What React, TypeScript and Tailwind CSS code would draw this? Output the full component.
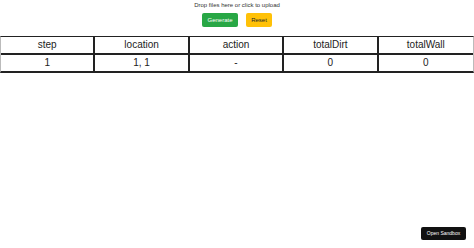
import React from "react";

const headers = ["step", "location", "action", "totalDirt", "totalWall"];
const values = ["1", "1, 1", "-", "0", "0"];

export default function App() {
  return (
    <div className="relative h-[248px] w-[474px] bg-white font-['Liberation_Sans',Arial,sans-serif] text-[#222]">
      <div className="pt-[1px] text-center text-[6px] leading-[8px] text-[#333]">
        Drop files here or click to upload
      </div>
      <div className="mt-[4px] flex justify-center gap-[8px]">
        <button className="h-[14px] w-[36px] rounded-[2px] bg-[#28a745] text-[6px] leading-[14px] text-white">
          Generate
        </button>
        <button className="h-[14px] w-[26px] rounded-[2px] bg-[#ffc107] text-[6px] leading-[14px] text-[#212529]">
          Reset
        </button>
      </div>
      <div className="mt-[9px] border-x border-x-[#bbb] border-t-[1.5px] border-t-[#222] border-b-2 border-b-[#222]">
        <div className="grid grid-cols-5 border-b-2 border-b-[#222]">
          {headers.map((h, i) => (
            <div
              key={h}
              className={
                i < 4
                  ? "h-[16px] border-r-2 border-r-[#222] text-center text-[10px] leading-[16px]"
                  : "h-[16px] text-center text-[10px] leading-[16px]"
              }
            >
              {h}
            </div>
          ))}
        </div>
        <div className="grid grid-cols-5">
          {values.map((v, i) => (
            <div
              key={i}
              className={
                i < 4
                  ? "h-[16px] border-r-2 border-r-[#222] text-center text-[10px] leading-[16px]"
                  : "h-[16px] text-center text-[10px] leading-[16px]"
              }
            >
              {v}
            </div>
          ))}
        </div>
      </div>
      <button className="absolute bottom-[8px] right-[8px] h-[13px] w-[45px] rounded-[2px] bg-[#111] text-[5px] leading-[13px] text-white">
        Open Sandbox
      </button>
    </div>
  );
}
